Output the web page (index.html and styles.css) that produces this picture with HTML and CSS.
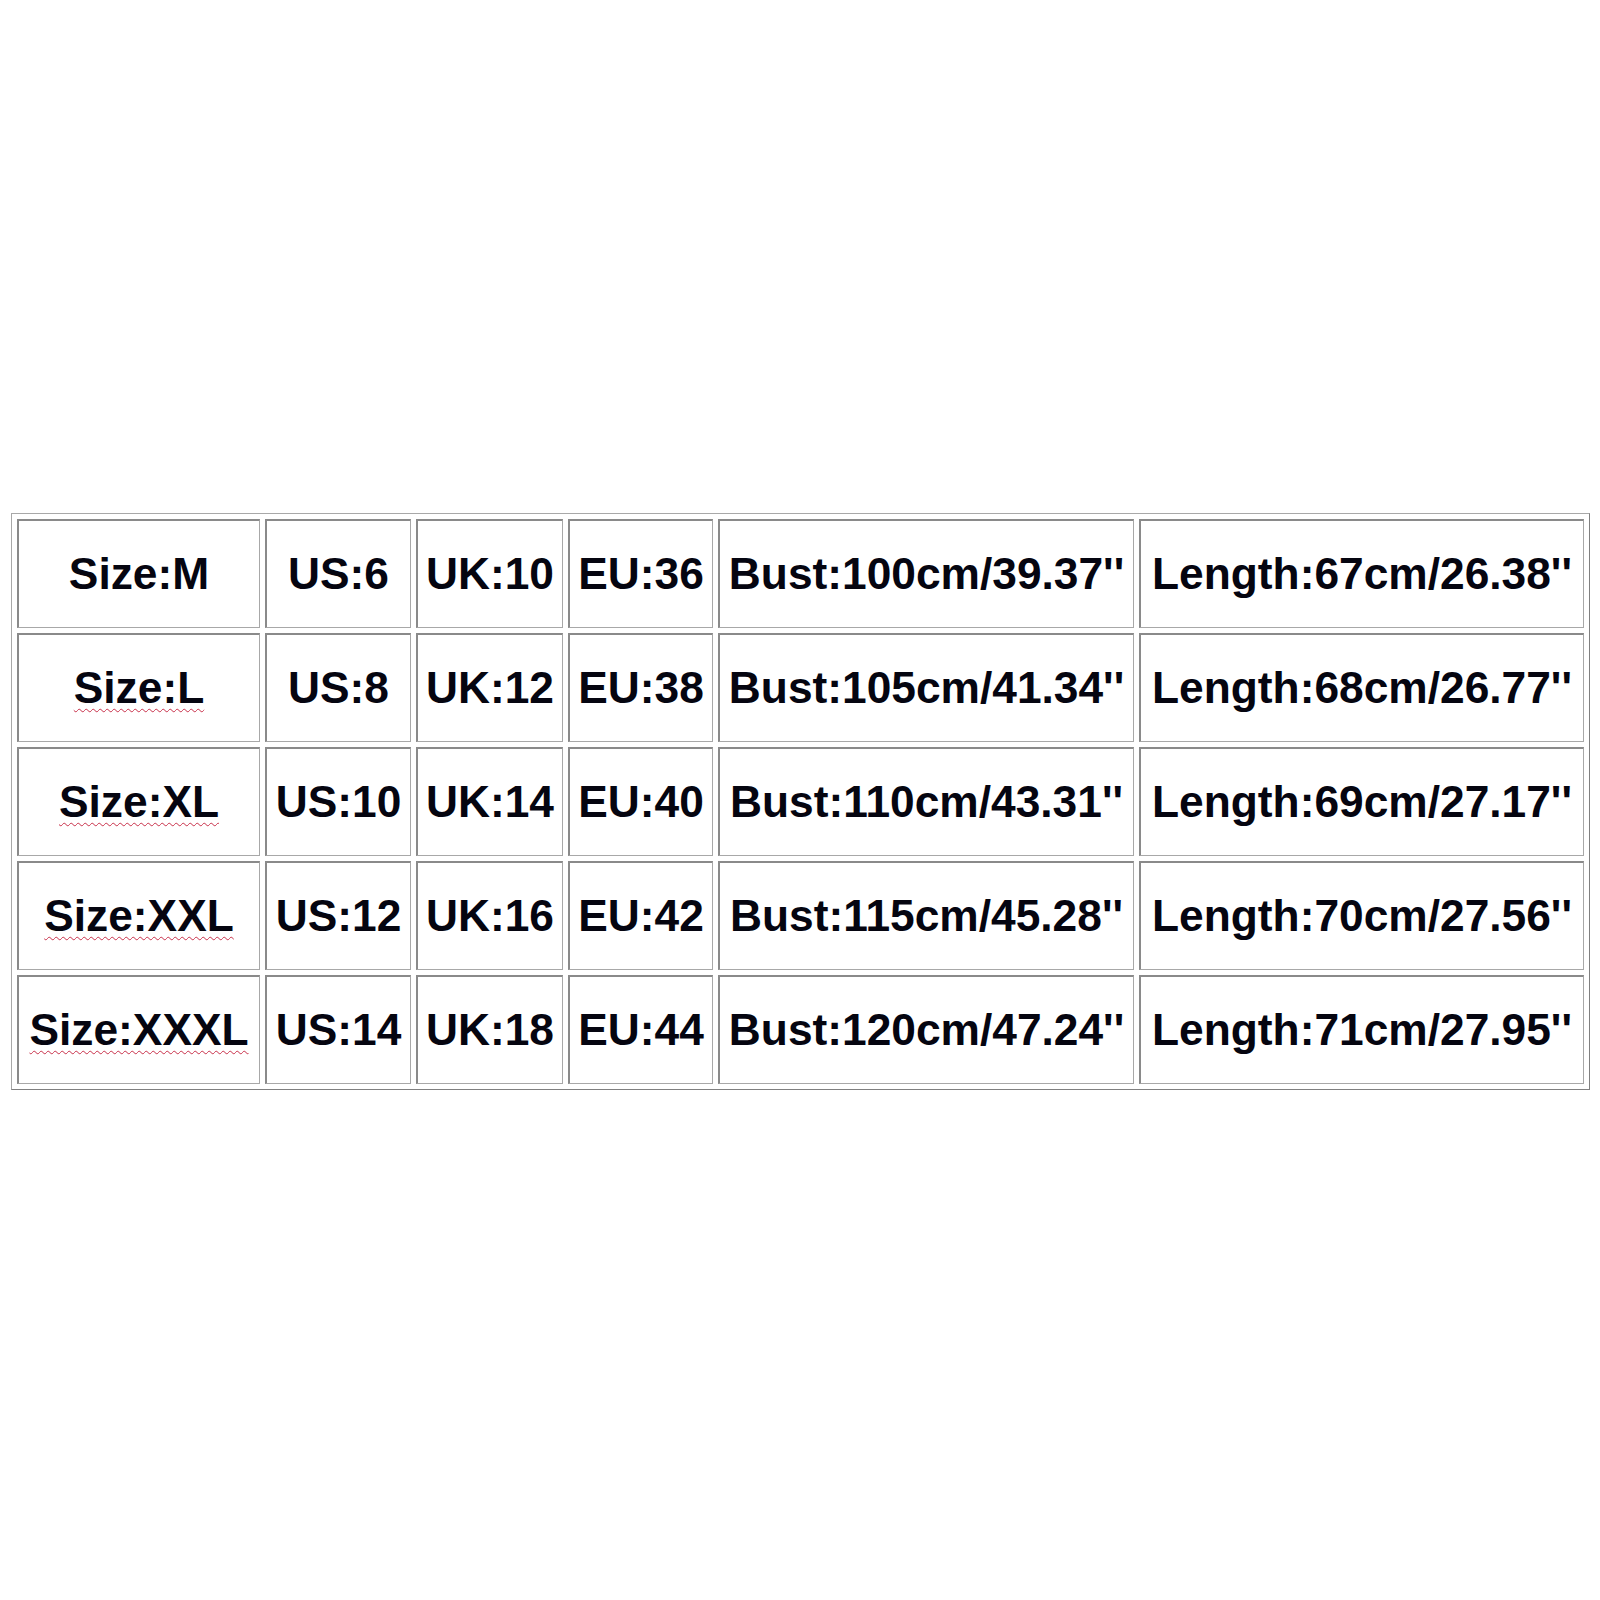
FILE: index.html
```html
<!DOCTYPE html>
<html>
<head>
<meta charset="utf-8">
<link rel="stylesheet" href="styles.css">
</head>
<body>
<div class="page">
<table class="sizes">
<colgroup>
<col class="c1"><col class="c2"><col class="c3"><col class="c4"><col class="c5"><col class="c6">
</colgroup>
<tr><td>Size:M</td><td>US:6</td><td>UK:10</td><td>EU:36</td><td>Bust:100cm/39.37''</td><td>Length:67cm/26.38''</td></tr>
<tr><td><span class="spell">Size:L</span></td><td>US:8</td><td>UK:12</td><td>EU:38</td><td>Bust:105cm/41.34''</td><td>Length:68cm/26.77''</td></tr>
<tr><td><span class="spell">Size:XL</span></td><td>US:10</td><td>UK:14</td><td>EU:40</td><td>Bust:110cm/43.31''</td><td>Length:69cm/27.17''</td></tr>
<tr><td><span class="spell">Size:XXL</span></td><td>US:12</td><td>UK:16</td><td>EU:42</td><td>Bust:115cm/45.28''</td><td>Length:70cm/27.56''</td></tr>
<tr><td><span class="spell">Size:XXXL</span></td><td>US:14</td><td>UK:18</td><td>EU:44</td><td>Bust:120cm/47.24''</td><td>Length:71cm/27.95''</td></tr>
</table>
</div>
</body>
</html>
```
FILE: styles.css
```css
html, body {
  margin: 0;
  padding: 0;
  background: #ffffff;
}
.page {
  width: 1600px;
  height: 1600px;
  padding: 513px 0 0 11px;
  box-sizing: border-box;
}
.sizes {
  table-layout: fixed;
  border-collapse: separate;
  border-spacing: 5px;
  border-style: solid;
  border-width: 1px;
  border-color: #a8a8a8 #808080 #808080 #a8a8a8;
  width: 1579px;
  font-family: "Liberation Sans", Arial, sans-serif;
  font-weight: bold;
  font-size: 44.3px;
  color: #050510;
}
.c1 { width: 243px; }
.c2 { width: 146px; }
.c3 { width: 147px; }
.c4 { width: 145px; }
.c5 { width: 416px; }
.c6 { width: 445px; }
.sizes td {
  box-sizing: border-box;
  height: 109px;
  padding: 0;
  text-align: center;
  vertical-align: middle;
  white-space: nowrap;
  border-style: solid;
  border-width: 2px 1px 1px 2px;
  border-color: #8a8a8a #a8a8a8 #a8a8a8 #8a8a8a;
}
.spell {
  text-decoration: underline wavy #c8304a;
  text-decoration-thickness: 1px;
  text-underline-offset: 5px;
}
```
